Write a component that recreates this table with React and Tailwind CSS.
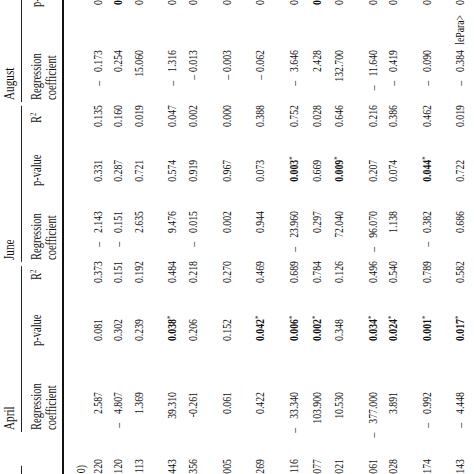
import React from "react";

const rows = [
  { mt: "mt-[0px]", a: "0.220", v: ["2.587", "0.081", "0.373", "– 2.143", "0.331", "0.135", "– 0.173", "0.612"] },
  { mt: "mt-[0px]", a: "0.120", v: ["– 4.807", "0.302", "0.151", "– 0.151", "0.287", "0.160", "0.254", "0.031*"] },
  { mt: "mt-[1px]", a: "0.113", v: ["1.369", "0.239", "0.192", "2.635", "0.721", "0.019", "15.060", "0.718"] },
  { mt: "mt-[13px]", a: "0.443", v: ["39.310", "0.038*", "0.484", "9.476", "0.574", "0.047", "– 1.316", "0.576"] },
  { mt: "mt-[1px]", a: "0.356", v: ["-0.261", "0.206", "0.218", "– 0.015", "0.919", "0.002", "–0.013", "0.844"] },
  { mt: "mt-[14px]", a: "0.005", v: ["0.061", "0.152", "0.270", "0.002", "0.967", "0.000", "–0.003", "0.962"] },
  { mt: "mt-[13px]", a: "0.269", v: ["0.422", "0.042*", "0.469", "0.944", "0.073", "0.388", "–0.062", "0.062"] },
  { mt: "mt-[14px]", a: "0.116", v: ["– 33.340", "0.006*", "0.689", "– 23.960", "0.003*", "0.752", "– 3.646", "0.058"] },
  { mt: "mt-[3px]", a: "0.077", v: ["103.900", "0.002*", "0.784", "0.297", "0.669", "0.028", "2.428", "0.002*"] },
  { mt: "mt-[2px]", a: "0.021", v: ["10.530", "0.348", "0.126", "72.040", "0.009*", "0.646", "132.700", "0.064"] },
  { mt: "mt-[14px]", a: "0.061", v: ["– 377.000", "0.034*", "0.496", "– 96.070", "0.207", "0.216", "– 11.640", "0.198"] },
  { mt: "mt-[0px]", a: "0.028", v: ["3.891", "0.024*", "0.540", "1.138", "0.074", "0.386", "– 0.419", "0.053"] },
  { mt: "mt-[14px]", a: "0.174", v: ["– 0.992", "0.001*", "0.789", "– 0.382", "0.044*", "0.462", "– 0.090", "0.119"] },
  { mt: "mt-[13px]", a: "0.143", v: ["– 4.448", "0.017*", "0.582", "0.686", "0.722", "0.019", "– 0.384", "0.052"], extra: "lePara>" },
];

function Reg({ s }) {
  if (s.startsWith("– ")) {
    return (
      <span className="whitespace-nowrap">
        <span>–</span>
        <span className="ml-[12px]">{s.slice(2)}</span>
      </span>
    );
  }
  if (s.startsWith("–")) {
    return (
      <span className="whitespace-nowrap">
        <span>–</span>
        <span className="ml-[4px]">{s.slice(1)}</span>
      </span>
    );
  }
  return <span className="whitespace-nowrap">{s}</span>;
}

function P({ s }) {
  if (s.endsWith("*")) {
    return (
      <span className="whitespace-nowrap">
        <span className="font-bold">{s.slice(0, -1)}</span>
        <span className="relative top-[-3px] text-[9px]">*</span>
      </span>
    );
  }
  return <span className="whitespace-nowrap">{s}</span>;
}

function R2() {
  return (
    <span className="whitespace-nowrap">
      R<span className="relative top-[-5px] text-[9px]">2</span>
    </span>
  );
}

function RegHead() {
  return (
    <div className="flex flex-col whitespace-nowrap">
      <span>Regression</span>
      <span>coefficient</span>
    </div>
  );
}

function Row({ r }) {
  const v = r.v;
  return (
    <div className={`flex h-[20px] items-center text-[13px] leading-none ${r.mt}`}>
      <div className="flex w-[20px] shrink-0 justify-end">
        <span className="whitespace-nowrap">{r.a}</span>
      </div>
      <div className="flex w-[89.33px] shrink-0 justify-end">
        <Reg s={v[0]} />
      </div>
      <div className="flex w-[141.33px] shrink-0 pl-[68px]">
        <P s={v[1]} />
      </div>
      <div className="flex w-[36px] shrink-0 pl-[4px]">
        <span>{v[2]}</span>
      </div>
      <div className="flex w-[64px] shrink-0 justify-end">
        <Reg s={v[3]} />
      </div>
      <div className="flex w-[108px] shrink-0 pl-[39px]">
        <P s={v[4]} />
      </div>
      <div className="flex w-[37.33px] shrink-0 pl-[4px]">
        <span>{v[5]}</span>
      </div>
      <div className="flex w-[69.33px] shrink-0 justify-end">
        <Reg s={v[6]} />
      </div>
      <div className="flex w-[60px] shrink-0 pl-[7px]">
        {r.extra ? <span className="whitespace-nowrap">{r.extra}</span> : null}
      </div>
      <div className="flex shrink-0">
        <P s={v[7]} />
      </div>
    </div>
  );
}

export default function App() {
  return (
    <div className="relative h-[474px] w-[474px] overflow-hidden bg-white font-['Liberation_Serif','Times_New_Roman',serif] text-[#111]">
      <div className="ml-[-79px] h-[474px] w-[632px] -rotate-90 scale-x-75">
        {/* month header */}
        <div className="flex h-[21px] items-start pt-[2px] text-[15px] leading-none">
          <div className="w-[58.67px] shrink-0" />
          <div className="w-[226.67px] shrink-0">April</div>
          <div className="w-[213.33px] shrink-0">June</div>
          <div className="shrink-0">August</div>
        </div>
        {/* cmidrules */}
        <div className="flex h-px">
          <div className="w-[10.67px] shrink-0 bg-[#222]" />
          <div className="w-[45.33px] shrink-0" />
          <div className="w-[221.33px] shrink-0 bg-[#222]" />
          <div className="w-[5.33px] shrink-0" />
          <div className="w-[208px] shrink-0 bg-[#222]" />
          <div className="w-[5.33px] shrink-0" />
          <div className="w-[160px] shrink-0 bg-[#222]" />
        </div>
        {/* column headers */}
        <div className="flex h-[40px] pt-[8px] text-[14px] leading-[14.5px]">
          <div className="w-[58.67px] shrink-0" />
          <div className="w-[112px] shrink-0">
            <RegHead />
          </div>
          <div className="w-[88px] shrink-0 whitespace-nowrap">p-value</div>
          <div className="w-[26.67px] shrink-0">
            <R2 />
          </div>
          <div className="w-[98.67px] shrink-0">
            <RegHead />
          </div>
          <div className="w-[84px] shrink-0 whitespace-nowrap">p-value</div>
          <div className="w-[30.67px] shrink-0">
            <R2 />
          </div>
          <div className="w-[124px] shrink-0">
            <RegHead />
          </div>
          <div className="shrink-0 whitespace-nowrap">p-value</div>
        </div>
        {/* thick rule */}
        <div className="h-[2px] w-[660px] bg-[#111]" />
        {/* section label row */}
        <div className="mt-[9px] flex h-[14px] items-center text-[13px] leading-none">
          <div className="flex w-[12px] shrink-0 justify-end">
            <span className="whitespace-nowrap">(n = 10)</span>
          </div>
        </div>
        {rows.map((r, i) => (
          <Row key={i} r={r} />
        ))}
      </div>
    </div>
  );
}
